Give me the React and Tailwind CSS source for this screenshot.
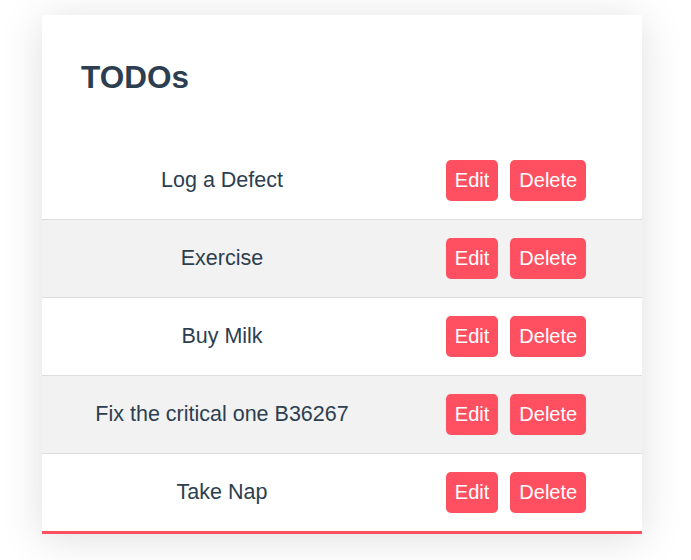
export default function App() {
  const items = ["Log a Defect", "Exercise", "Buy Milk", "Fix the critical one B36267", "Take Nap"];
  return (
    <div className="min-h-[560px] bg-white pt-[15px] pl-[42px]" style={{ fontFamily: '"Liberation Sans", Arial, sans-serif' }}>
      <div className="w-[600px] bg-white shadow-[0_5px_40px_rgba(0,0,0,0.13)] border-b-[3px] border-[#ff5061]">
        <div className="h-[127px] flex items-center pl-[39px] pb-[2px]">
          <h1 className="text-[31.5px] font-bold text-[#2c3e50] leading-none">TODOs</h1>
        </div>
        {items.map((t, i) => (
          <div
            key={t}
            className={`flex items-center ${i % 2 === 1 ? "bg-[#f2f2f2]" : "bg-white"} ${i < items.length - 1 ? "h-[78px] border-b border-[#dddddd]" : "h-[77px]"}`}
          >
            <div className="w-[360px] text-center text-[21.5px] text-[#2c3e50]">{t}</div>
            <div className="w-[240px] flex justify-center">
              <button className="mr-3 h-[41px] px-[9px] pb-[2px] rounded-[5px] bg-[#ff5061] text-white text-[20px]">Edit</button>
              <button className="mr-3 h-[41px] px-[9px] pb-[2px] rounded-[5px] bg-[#ff5061] text-white text-[20px]">Delete</button>
            </div>
          </div>
        ))}
      </div>
    </div>
  );
}
